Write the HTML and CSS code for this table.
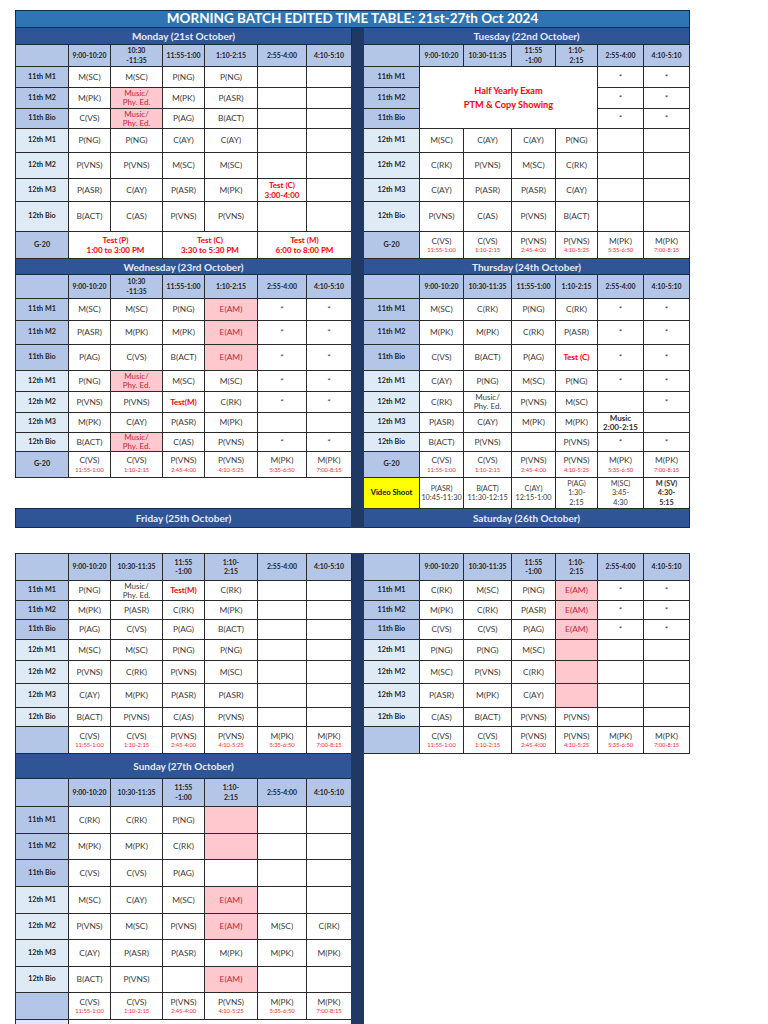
FILE: index.html
```html
<!DOCTYPE html>
<html>
<head>
<meta charset="utf-8">
<title>Morning Batch Time Table</title>
<link rel="stylesheet" href="styles.css">
</head>
<body>
<table class="sheet">
<colgroup>
<col class="w53"><col class="w42"><col class="w52"><col class="w42"><col class="w53"><col class="w49"><col class="w45">
<col class="w12">
<col class="w56"><col class="w44"><col class="w48"><col class="w44"><col class="w42"><col class="w46"><col class="w46">
</colgroup>
<tbody>
<tr class="h17"><td colspan="15" class="title">MORNING BATCH EDITED TIME TABLE: 21st-27th Oct 2024</td></tr>

<tr class="h17"><td colspan="7" class="day">Monday (21st October)</td><td rowspan="22" class="sep"></td><td colspan="7" class="day">Tuesday (22nd October)</td></tr>
<tr class="h22">
<td class="th"></td><td class="th">9:00-10:20</td><td class="th">10:30<br>-11:35</td><td class="th">11:55-1:00</td><td class="th">1:10-2:15</td><td class="th">2:55-4:00</td><td class="th">4:10-5:10</td>
<td class="th"></td><td class="th">9:00-10:20</td><td class="th">10:30-11:35</td><td class="th">11:55<br>-1:00</td><td class="th">1:10-<br>2:15</td><td class="th">2:55-4:00</td><td class="th">4:10-5:10</td>
</tr>
<tr class="h21">
<td class="lab l11">11th M1</td><td>M(SC)</td><td>M(SC)</td><td>P(NG)</td><td>P(NG)</td><td></td><td></td>
<td class="lab l11">11th M1</td><td colspan="4" rowspan="3" class="red big">Half Yearly Exam<br>PTM &amp; Copy Showing</td><td>*</td><td>*</td>
</tr>
<tr class="h21">
<td class="lab l11">11th M2</td><td>M(PK)</td><td class="pk two">Music/<br>Phy. Ed.</td><td>M(PK)</td><td>P(ASR)</td><td></td><td></td>
<td class="lab l11">11th M2</td><td>*</td><td>*</td>
</tr>
<tr class="h20">
<td class="lab l11">11th Bio</td><td>C(VS)</td><td class="pk two">Music/<br>Phy. Ed.</td><td>P(AG)</td><td>B(ACT)</td><td></td><td></td>
<td class="lab l11">11th Bio</td><td>*</td><td>*</td>
</tr>
<tr class="h24">
<td class="lab l12">12th M1</td><td>P(NG)</td><td>P(NG)</td><td>C(AY)</td><td>C(AY)</td><td></td><td></td>
<td class="lab l12">12th M1</td><td>M(SC)</td><td>C(AY)</td><td>C(AY)</td><td>P(NG)</td><td></td><td></td>
</tr>
<tr class="h26">
<td class="lab l12">12th M2</td><td>P(VNS)</td><td>P(VNS)</td><td>M(SC)</td><td>M(SC)</td><td></td><td></td>
<td class="lab l12">12th M2</td><td>C(RK)</td><td>P(VNS)</td><td>M(SC)</td><td>C(RK)</td><td></td><td></td>
</tr>
<tr class="h23">
<td class="lab l12">12th M3</td><td>P(ASR)</td><td>C(AY)</td><td>P(ASR)</td><td>M(PK)</td><td class="red">Test (C)<br>3:00-4:00</td><td></td>
<td class="lab l12">12th M3</td><td>C(AY)</td><td>P(ASR)</td><td>P(ASR)</td><td>C(AY)</td><td></td><td></td>
</tr>
<tr class="h30">
<td class="lab l12">12th Bio</td><td>B(ACT)</td><td>C(AS)</td><td>P(VNS)</td><td>P(VNS)</td><td></td><td></td>
<td class="lab l12">12th Bio</td><td>P(VNS)</td><td>C(AS)</td><td>P(VNS)</td><td>B(ACT)</td><td></td><td></td>
</tr>
<tr class="h27">
<td class="lab lg">G-20</td><td colspan="2" class="red">Test (P)<br>1:00 to 3:00 PM</td><td colspan="2" class="red">Test (C)<br>3:30 to 5:30 PM</td><td colspan="2" class="red">Test (M)<br>6:00 to 8:00 PM</td>
<td class="lab lg">G-20</td><td class="g">C(VS)<span class="t">11:55-1:00</span></td><td class="g">C(VS)<span class="t">1:10-2:15</span></td><td class="g">P(VNS)<span class="t">2:45-4:00</span></td><td class="g">P(VNS)<span class="t">4:10-5:25</span></td><td class="g">M(PK)<span class="t">5:35-6:50</span></td><td class="g">M(PK)<span class="t">7:00-8:15</span></td>
</tr>

<tr class="h16"><td colspan="7" class="day">Wednesday (23rd October)</td><td colspan="7" class="day">Thursday (24th October)</td></tr>
<tr class="h24">
<td class="th"></td><td class="th">9:00-10:20</td><td class="th">10:30<br>-11:35</td><td class="th">11:55-1:00</td><td class="th">1:10-2:15</td><td class="th">2:55-4:00</td><td class="th">4:10-5:10</td>
<td class="th"></td><td class="th">9:00-10:20</td><td class="th">10:30-11:35</td><td class="th">11:55-1:00</td><td class="th">1:10-2:15</td><td class="th">2:55-4:00</td><td class="th">4:10-5:10</td>
</tr>
<tr class="h22">
<td class="lab l11">11th M1</td><td>M(SC)</td><td>M(SC)</td><td>P(NG)</td><td class="pk">E(AM)</td><td>*</td><td>*</td>
<td class="lab l11">11th M1</td><td>M(SC)</td><td>C(RK)</td><td>P(NG)</td><td>C(RK)</td><td>*</td><td>*</td>
</tr>
<tr class="h24">
<td class="lab l11">11th M2</td><td>P(ASR)</td><td>M(PK)</td><td>M(PK)</td><td class="pk">E(AM)</td><td>*</td><td>*</td>
<td class="lab l11">11th M2</td><td>M(PK)</td><td>M(PK)</td><td>C(RK)</td><td>P(ASR)</td><td>*</td><td>*</td>
</tr>
<tr class="h26">
<td class="lab l11">11th Bio</td><td>P(AG)</td><td>C(VS)</td><td>B(ACT)</td><td class="pk">E(AM)</td><td>*</td><td>*</td>
<td class="lab l11">11th Bio</td><td>C(VS)</td><td>B(ACT)</td><td>P(AG)</td><td class="red">Test (C)</td><td>*</td><td>*</td>
</tr>
<tr class="h21">
<td class="lab l12">12th M1</td><td>P(NG)</td><td class="pk two">Music/<br>Phy. Ed.</td><td>M(SC)</td><td>M(SC)</td><td>*</td><td>*</td>
<td class="lab l12">12th M1</td><td>C(AY)</td><td>P(NG)</td><td>M(SC)</td><td>P(NG)</td><td>*</td><td>*</td>
</tr>
<tr class="h21">
<td class="lab l12">12th M2</td><td>P(VNS)</td><td>P(VNS)</td><td class="red">Test(M)</td><td>C(RK)</td><td>*</td><td>*</td>
<td class="lab l12">12th M2</td><td>C(RK)</td><td class="two">Music/<br>Phy. Ed.</td><td>P(VNS)</td><td>M(SC)</td><td></td><td>*</td>
</tr>
<tr class="h20">
<td class="lab l12">12th M3</td><td>M(PK)</td><td>C(AY)</td><td>P(ASR)</td><td>M(PK)</td><td></td><td></td>
<td class="lab l12">12th M3</td><td>P(ASR)</td><td>C(AY)</td><td>M(PK)</td><td>M(PK)</td><td class="semi two">Music<br>2:00-2:15</td><td></td>
</tr>
<tr class="h19">
<td class="lab l12">12th Bio</td><td>B(ACT)</td><td class="pk two">Music/<br>Phy. Ed.</td><td>C(AS)</td><td>P(VNS)</td><td>*</td><td>*</td>
<td class="lab l12">12th Bio</td><td>B(ACT)</td><td>P(VNS)</td><td></td><td>P(VNS)</td><td>*</td><td>*</td>
</tr>
<tr class="h26">
<td class="lab lg">G-20</td><td class="g">C(VS)<span class="t">11:55-1:00</span></td><td class="g">C(VS)<span class="t">1:10-2:15</span></td><td class="g">P(VNS)<span class="t">2:45-4:00</span></td><td class="g">P(VNS)<span class="t">4:10-5:25</span></td><td class="g">M(PK)<span class="t">5:35-6:50</span></td><td class="g">M(PK)<span class="t">7:00-8:15</span></td>
<td class="lab lg">G-20</td><td class="g">C(VS)<span class="t">11:55-1:00</span></td><td class="g">C(VS)<span class="t">1:10-2:15</span></td><td class="g">P(VNS)<span class="t">2:45-4:00</span></td><td class="g">P(VNS)<span class="t">4:10-5:25</span></td><td class="g">M(PK)<span class="t">5:35-6:50</span></td><td class="g">M(PK)<span class="t">7:00-8:15</span></td>
</tr>
<tr class="h31">
<td colspan="7" class="blank"></td>
<td class="lab vs">Video Shoot</td><td class="v">P(ASR)<br>10:45-11:30</td><td class="v">B(ACT)<br>11:30-12:15</td><td class="v">C(AY)<br>12:15-1:00</td><td class="v">P(AG)<br>1:30-<br>2:15</td><td class="v">M(SC)<br>3:45-<br>4:30</td><td class="v semi">M (SV)<br>4:30-<br>5:15</td>
</tr>
<tr class="h19"><td colspan="7" class="day">Friday (25th October)</td><td colspan="7" class="day">Saturday (26th October)</td></tr>

<tr class="h26"><td colspan="15" class="blank"></td></tr>

<tr class="h27">
<td class="th"></td><td class="th">9:00-10:20</td><td class="th">10:30-11:35</td><td class="th">11:55<br>-1:00</td><td class="th">1:10-<br>2:15</td><td class="th">2:55-4:00</td><td class="th">4:10-5:10</td>
<td rowspan="20" class="sep"></td>
<td class="th"></td><td class="th">9:00-10:20</td><td class="th">10:30-11:35</td><td class="th">11:55<br>-1:00</td><td class="th">1:10-<br>2:15</td><td class="th">2:55-4:00</td><td class="th">4:10-5:10</td>
</tr>
<tr class="h20">
<td class="lab l11">11th M1</td><td>P(NG)</td><td class="two">Music/<br>Phy. Ed.</td><td class="red">Test(M)</td><td>C(RK)</td><td></td><td></td>
<td class="lab l11">11th M1</td><td>C(RK)</td><td>M(SC)</td><td>P(NG)</td><td class="pk">E(AM)</td><td>*</td><td>*</td>
</tr>
<tr class="h19">
<td class="lab l11">11th M2</td><td>M(PK)</td><td>P(ASR)</td><td>C(RK)</td><td>M(PK)</td><td></td><td></td>
<td class="lab l11">11th M2</td><td>M(PK)</td><td>C(RK)</td><td>P(ASR)</td><td class="pk">E(AM)</td><td>*</td><td>*</td>
</tr>
<tr class="h20">
<td class="lab l11">11th Bio</td><td>P(AG)</td><td>C(VS)</td><td>P(AG)</td><td>B(ACT)</td><td></td><td></td>
<td class="lab l11">11th Bio</td><td>C(VS)</td><td>C(VS)</td><td>P(AG)</td><td class="pk">E(AM)</td><td>*</td><td>*</td>
</tr>
<tr class="h21">
<td class="lab l12">12th M1</td><td>M(SC)</td><td>M(SC)</td><td>P(NG)</td><td>P(NG)</td><td></td><td></td>
<td class="lab l12">12th M1</td><td>P(NG)</td><td>P(NG)</td><td>M(SC)</td><td class="pk"></td><td></td><td></td>
</tr>
<tr class="h23">
<td class="lab l12">12th M2</td><td>P(VNS)</td><td>C(RK)</td><td>P(VNS)</td><td>M(SC)</td><td></td><td></td>
<td class="lab l12">12th M2</td><td>M(SC)</td><td>P(VNS)</td><td>C(RK)</td><td class="pk"></td><td></td><td></td>
</tr>
<tr class="h24">
<td class="lab l12">12th M3</td><td>C(AY)</td><td>M(PK)</td><td>P(ASR)</td><td>P(ASR)</td><td></td><td></td>
<td class="lab l12">12th M3</td><td>P(ASR)</td><td>M(PK)</td><td>C(AY)</td><td class="pk"></td><td></td><td></td>
</tr>
<tr class="h19">
<td class="lab l12">12th Bio</td><td>B(ACT)</td><td>P(VNS)</td><td>C(AS)</td><td>P(VNS)</td><td></td><td></td>
<td class="lab l12">12th Bio</td><td>C(AS)</td><td>B(ACT)</td><td>P(VNS)</td><td>P(VNS)</td><td></td><td></td>
</tr>
<tr class="h27">
<td class="lab lg"></td><td class="g">C(VS)<span class="t">11:55-1:00</span></td><td class="g">C(VS)<span class="t">1:10-2:15</span></td><td class="g">P(VNS)<span class="t">2:45-4:00</span></td><td class="g">P(VNS)<span class="t">4:10-5:25</span></td><td class="g">M(PK)<span class="t">5:35-6:50</span></td><td class="g">M(PK)<span class="t">7:00-8:15</span></td>
<td class="lab lg"></td><td class="g">C(VS)<span class="t">11:55-1:00</span></td><td class="g">C(VS)<span class="t">1:10-2:15</span></td><td class="g">P(VNS)<span class="t">2:45-4:00</span></td><td class="g">P(VNS)<span class="t">4:10-5:25</span></td><td class="g">M(PK)<span class="t">5:35-6:50</span></td><td class="g">M(PK)<span class="t">7:00-8:15</span></td>
</tr>

<tr class="h25"><td colspan="7" class="day">Sunday (27th October)</td><td colspan="7" rowspan="11" class="blank"></td></tr>
<tr class="h28">
<td class="th"></td><td class="th">9:00-10:20</td><td class="th">10:30-11:35</td><td class="th">11:55<br>-1:00</td><td class="th">1:10-<br>2:15</td><td class="th">2:55-4:00</td><td class="th">4:10-5:10</td>
</tr>
<tr class="h27">
<td class="lab l11">11th M1</td><td>C(RK)</td><td>C(RK)</td><td>P(NG)</td><td class="pk"></td><td></td><td></td>
</tr>
<tr class="h26">
<td class="lab l11">11th M2</td><td>M(PK)</td><td>M(PK)</td><td>C(RK)</td><td class="pk"></td><td></td><td></td>
</tr>
<tr class="h27">
<td class="lab l11">11th Bio</td><td>C(VS)</td><td>C(VS)</td><td>P(AG)</td><td></td><td></td><td></td>
</tr>
<tr class="h27">
<td class="lab l12">12th M1</td><td>M(SC)</td><td>C(AY)</td><td>M(SC)</td><td class="pk">E(AM)</td><td></td><td></td>
</tr>
<tr class="h26">
<td class="lab l12">12th M2</td><td>P(VNS)</td><td>M(SC)</td><td>P(VNS)</td><td class="pk">E(AM)</td><td>M(SC)</td><td>C(RK)</td>
</tr>
<tr class="h27">
<td class="lab l12">12th M3</td><td>C(AY)</td><td>P(ASR)</td><td>P(ASR)</td><td>M(PK)</td><td>M(PK)</td><td>M(PK)</td>
</tr>
<tr class="h26">
<td class="lab l12">12th Bio</td><td>B(ACT)</td><td>P(VNS)</td><td></td><td class="pk">E(AM)</td><td></td><td></td>
</tr>
<tr class="h27">
<td class="lab lg"></td><td class="g">C(VS)<span class="t">11:55-1:00</span></td><td class="g">C(VS)<span class="t">1:10-2:15</span></td><td class="g">P(VNS)<span class="t">2:45-4:00</span></td><td class="g">P(VNS)<span class="t">4:10-5:25</span></td><td class="g">M(PK)<span class="t">5:35-6:50</span></td><td class="g">M(PK)<span class="t">7:00-8:15</span></td>
</tr>
<tr class="h20">
<td class="lab l12 tail"></td><td colspan="6" class="blank"></td>
</tr>
</tbody>
</table>
</body>
</html>
```

FILE: styles.css
```css
html, body {
  margin: 0;
  padding: 0;
  background: #ffffff;
}
body {
  padding: 10px 0 0 15px;
  font-family: Lato, "Open Sans", "Liberation Sans", sans-serif;
  overflow: hidden;
  height: 1024px;
  box-sizing: border-box;
}
.sheet {
  border-collapse: collapse;
  table-layout: fixed;
  width: 674px;
}
.w53 { width: 53px; }
.w42 { width: 42px; }
.w52 { width: 52px; }
.w49 { width: 49px; }
.w45 { width: 45px; }
.w12 { width: 12px; }
.w56 { width: 56px; }
.w44 { width: 44px; }
.w48 { width: 48px; }
.w46 { width: 46px; }

.h16 { height: 16px; }
.h17 { height: 17px; }
.h19 { height: 19px; }
.h20 { height: 20px; }
.h21 { height: 21px; }
.h22 { height: 22px; }
.h23 { height: 23px; }
.h24 { height: 24px; }
.h25 { height: 25px; }
.h26 { height: 26px; }
.h27 { height: 27px; }
.h28 { height: 28px; }
.h30 { height: 30px; }
.h31 { height: 31px; }

.sheet td {
  border: 1px solid #2a2a2a;
  padding: 0;
  text-align: center;
  vertical-align: middle;
  font-size: 8.4px;
  line-height: 1.2;
  color: #3c3c3c;
  overflow: hidden;
  white-space: nowrap;
}
.sheet td.title {
  background: #2e75b6;
  color: #ffffff;
  font-weight: 700;
  font-size: 13.5px;
  line-height: 1;
  border-color: #1b2a44;
}
.sheet td.day {
  background: #2f5597;
  color: #e6ebf5;
  font-weight: 700;
  font-size: 10px;
  line-height: 1;
  border-color: #1b2a44;
}
.sheet td.sep {
  background: #1f3864;
  border-color: #1f3864;
}
.sheet td.th {
  background: #b4c6e7;
  color: #1e1e1e;
  font-weight: 700;
  font-size: 6.9px;
  line-height: 1.35;
}
.sheet td.lab {
  font-weight: 700;
  font-size: 7.2px;
  color: #222222;
}
.sheet td.l11 { background: #b4c6e7; }
.sheet td.l12 { background: #deebf7; }
.sheet td.lg { background: #b4c6e7; }
.sheet td.vs {
  background: #ffff00;
  color: #111111;
  font-size: 7.6px;
}
.sheet td.pk {
  background: #ffc7ce;
  color: #c4263c;
}
.sheet td.two {
  font-size: 8px;
  line-height: 8.6px;
}
.sheet td.red {
  color: #ff0000;
  font-weight: 700;
  font-size: 8px;
  line-height: 1.3;
}
.sheet td.big {
  font-size: 9.2px;
  line-height: 1.45;
}
.sheet td.semi {
  font-weight: 700;
  color: #2e2e2e;
}
.sheet td.g {
  line-height: 1.1;
}
.t {
  display: block;
  color: #ff1f1f;
  font-size: 5.8px;
  line-height: 1.25;
}
.sheet td.v {
  line-height: 9.4px;
  font-size: 7.3px;
}
.sheet td.blank {
  border: none;
  background: #ffffff;
}
.sheet td.tail {
  border-bottom: none;
}
```
